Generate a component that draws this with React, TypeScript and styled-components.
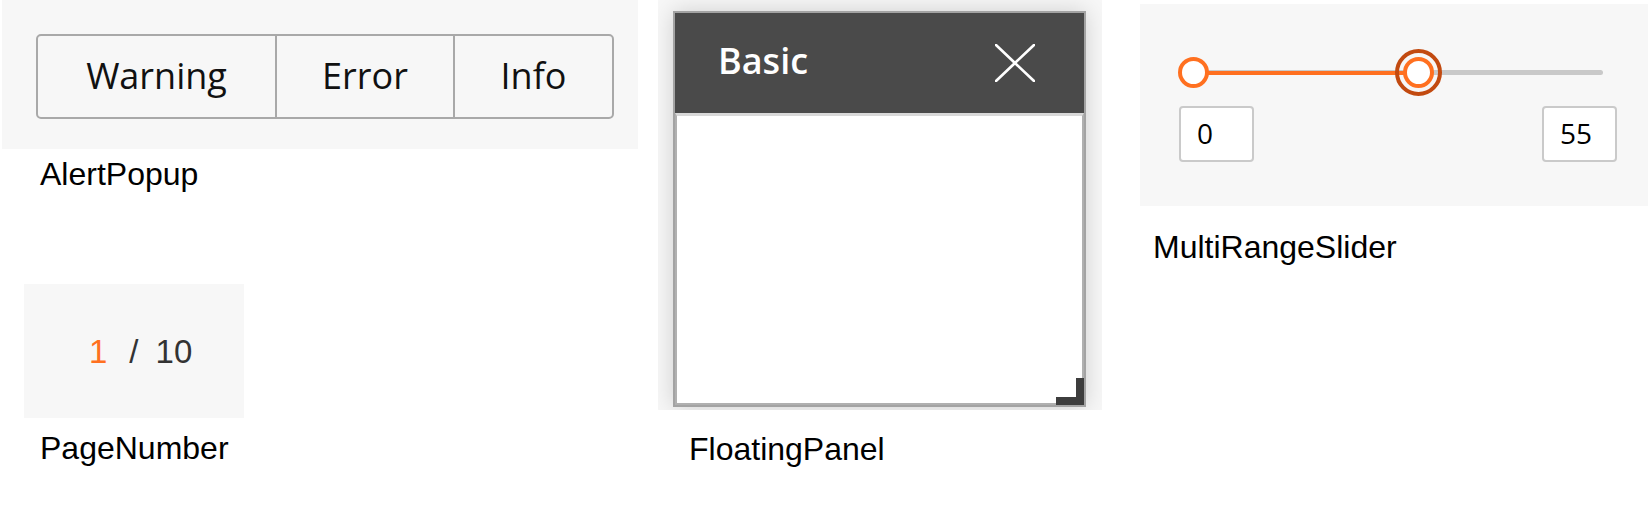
import React, { FunctionComponent } from "react";
import styled, { createGlobalStyle } from "styled-components";

const ORANGE = "#ff7020";
const ORANGE_DARK = "#c24a10";
const PREVIEW_BG = "#f7f7f7";

const GlobalStyle = createGlobalStyle`
  html, body {
    margin: 0;
    padding: 0;
    background: #fff;
  }
  * {
    box-sizing: border-box;
  }
`;

const Board = styled.main`
  display: flex;
  align-items: flex-start;
  width: 1652px;
  height: 518px;
  overflow: hidden;
`;

const Column = styled.div<{ $width: number }>`
  display: flex;
  flex-direction: column;
  flex: 0 0 ${({ $width }) => $width}px;
`;

const Story = styled.section<{ $top?: number }>`
  display: flex;
  flex-direction: column;
  align-items: flex-start;
  margin-top: ${({ $top = 0 }) => $top}px;
`;

const Preview = styled.div<{
  $left: number;
  $top: number;
  $width: number;
  $height: number;
}>`
  margin: ${({ $top }) => $top}px 0 0 ${({ $left }) => $left}px;
  width: ${({ $width }) => $width}px;
  height: ${({ $height }) => $height}px;
  background: ${PREVIEW_BG};
  overflow: hidden;
`;

const Caption = styled.h3<{ $left: number; $gap: number }>`
  margin: ${({ $gap }) => $gap}px 0 0 ${({ $left }) => $left}px;
  font: 400 32px/36px "Liberation Sans", Arial, sans-serif;
  color: #000;
`;

/* AlertPopup */

const ButtonGroup = styled.div`
  display: inline-flex;
  margin: 34px 0 0 34px;
  height: 85px;
  border: 2px solid #a9a9a9;
  border-radius: 5px;
  overflow: hidden;
`;

const AlertButton = styled.button<{ $width: number }>`
  width: ${({ $width }) => $width}px;
  padding: 0 0 1px;
  border: 0;
  background: transparent;
  font: 400 36px/1 "Open Sans", "Noto Sans", sans-serif;
  color: #111;

  & + & {
    border-left: 2px solid #a9a9a9;
  }
`;

/* PageNumber */

const Pager = styled.div`
  display: flex;
  align-items: center;
  height: 100%;
  padding-left: 65px;
  font: 400 33px/1 "Liberation Sans", Arial, sans-serif;
  color: #333;
`;

const PageCurrent = styled.span`
  color: ${ORANGE};
`;

const PageSlash = styled.span`
  margin-left: 22px;
`;

const PageTotal = styled.span`
  margin-left: 17px;
`;

/* FloatingPanel */

const Panel = styled.div`
  position: relative;
  display: flex;
  flex-direction: column;
  margin: 11px 0 0 15px;
  width: 413px;
  height: 396px;
  border: 2px solid #a3a3a3;
  box-shadow: 0 0 22px rgba(0, 0, 0, 0.16);
`;

const PanelHeader = styled.header`
  display: flex;
  align-items: center;
  justify-content: space-between;
  flex: 0 0 100px;
  padding: 0 49px 5px 43px;
  background: #4a4a4a;
`;

const PanelTitle = styled.span`
  font: 600 36px/1 "Open Sans", "Noto Sans", sans-serif;
  color: #fff;
`;

const CloseButton = styled.button`
  display: flex;
  padding: 0;
  border: 0;
  background: none;
  margin-top: 5px;
`;

const PanelBody = styled.div`
  flex: 1;
  background: #fff;
  border: 2px solid #b0b0b0;
  border-top: 3px solid #d8d8d8;
`;

const ResizeGrip = styled.span`
  position: absolute;
  right: 0;
  bottom: 0;
  width: 28px;
  height: 27px;
  border-right: 8px solid #3d3d3d;
  border-bottom: 8px solid #3d3d3d;
`;

/* MultiRangeSlider */

const Slider = styled.div`
  width: 438px;
  margin: 53px 0 0 39px;
`;

const Rail = styled.div`
  position: relative;
  height: 31px;
  margin: 0 14px;
`;

const RailTrack = styled.div`
  position: absolute;
  left: 0;
  right: 0;
  top: 50%;
  height: 5px;
  margin-top: -2.5px;
  border-radius: 3px;
  background: #c9c9c9;
`;

const RailFill = styled.div`
  position: absolute;
  top: 50%;
  height: 4px;
  margin-top: -2px;
  background: ${ORANGE};
`;

const Thumb = styled.span<{ $active?: boolean }>`
  position: absolute;
  top: 0;
  width: 31px;
  height: 31px;
  margin-left: -15.5px;
  border-radius: 50%;
  background: #fff;
  border: 4px solid ${ORANGE};
  ${({ $active }) =>
    $active && `outline: 4px solid ${ORANGE_DARK}; outline-offset: 4px;`}
`;

const ValueRow = styled.div`
  display: flex;
  justify-content: space-between;
  margin-top: 18px;
`;

const ValueField = styled.input`
  width: 75px;
  height: 56px;
  padding: 0 0 2px 16px;
  border: 2px solid #cacaca;
  border-radius: 4px;
  background: #fff;
  font: 400 28px/1 "Open Sans", "Noto Sans", sans-serif;
  color: #000;
  outline: none;
`;

const CloseIcon: FunctionComponent = () => (
  <svg width="40" height="38" viewBox="0 0 40 38" fill="none">
    <path
      d="M1 1 L39 37 M39 1 L1 37"
      stroke="#fff"
      strokeWidth="2.6"
      strokeLinecap="round"
    />
  </svg>
);

type RangeProps = { min: number; max: number; low: number; high: number };

const MultiRange: FunctionComponent<RangeProps> = ({ min, max, low, high }) => {
  const pct = (v: number) => ((v - min) / (max - min)) * 100;
  return (
    <Slider>
      <Rail>
        <RailTrack />
        <RailFill
          style={{ left: `${pct(low)}%`, width: `${pct(high) - pct(low)}%` }}
        />
        <Thumb style={{ left: `${pct(low)}%` }} />
        <Thumb $active style={{ left: `${pct(high)}%` }} />
      </Rail>
      <ValueRow>
        <ValueField value={String(low)} readOnly />
        <ValueField value={String(high)} readOnly />
      </ValueRow>
    </Slider>
  );
};

const App: FunctionComponent = () => (
  <>
    <GlobalStyle />
    <Board>
      <Column $width={658}>
        <Story>
          <Preview $left={2} $top={0} $width={636} $height={149}>
            <ButtonGroup>
              <AlertButton $width={237}>Warning</AlertButton>
              <AlertButton $width={178}>Error</AlertButton>
              <AlertButton $width={159}>Info</AlertButton>
            </ButtonGroup>
          </Preview>
          <Caption $left={40} $gap={7}>
            AlertPopup
          </Caption>
        </Story>
        <Story $top={92}>
          <Preview $left={24} $top={0} $width={220} $height={134}>
            <Pager>
              <PageCurrent>1</PageCurrent>
              <PageSlash>/</PageSlash>
              <PageTotal>10</PageTotal>
            </Pager>
          </Preview>
          <Caption $left={40} $gap={12}>
            PageNumber
          </Caption>
        </Story>
      </Column>

      <Column $width={481}>
        <Story>
          <Preview $left={0} $top={0} $width={444} $height={410}>
            <Panel>
              <PanelHeader>
                <PanelTitle>Basic</PanelTitle>
                <CloseButton>
                  <CloseIcon />
                </CloseButton>
              </PanelHeader>
              <PanelBody />
              <ResizeGrip />
            </Panel>
          </Preview>
          <Caption $left={31} $gap={21}>
            FloatingPanel
          </Caption>
        </Story>
      </Column>

      <Column $width={513}>
        <Story>
          <Preview $left={1} $top={4} $width={508} $height={202}>
            <MultiRange min={0} max={100} low={0} high={55} />
          </Preview>
          <Caption $left={14} $gap={23}>
            MultiRangeSlider
          </Caption>
        </Story>
      </Column>
    </Board>
  </>
);

export default App;
